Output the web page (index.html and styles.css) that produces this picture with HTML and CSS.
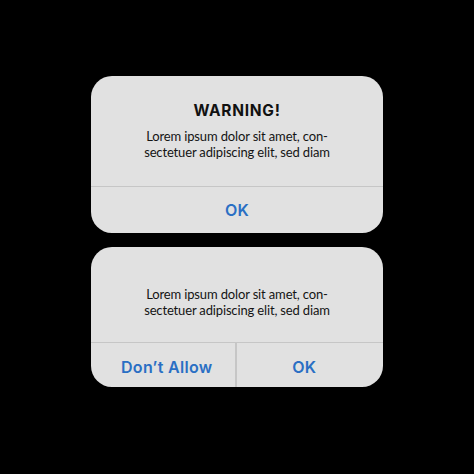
FILE: index.html
```html
<!DOCTYPE html>
<html>
<head>
<meta charset="utf-8">
<link rel="stylesheet" href="styles.css">
</head>
<body>
<main class="stage">
  <section class="alert">
    <div class="alert-body first">
      <h1 class="alert-title">WARNING!</h1>
      <p class="alert-text">Lorem ipsum dolor sit amet, con-<br>sectetuer adipiscing elit, sed diam</p>
    </div>
    <div class="alert-actions single">
      <button class="action">OK</button>
    </div>
  </section>
  <section class="alert">
    <div class="alert-body second">
      <p class="alert-text">Lorem ipsum dolor sit amet, con-<br>sectetuer adipiscing elit, sed diam</p>
    </div>
    <div class="alert-actions double">
      <button class="action deny">Don’t Allow</button>
      <button class="action split">OK</button>
    </div>
  </section>
</main>
</body>
</html>
```
FILE: styles.css
```css
html, body {
  margin: 0;
  padding: 0;
  background: #000;
}
.stage {
  width: 474px;
  height: 474px;
  box-sizing: border-box;
  padding: 76px 0 0 91px;
  display: flex;
  flex-direction: column;
  gap: 14px;
}
.alert {
  width: 292px;
  background: #e1e1e1;
  border-radius: 21px;
  overflow: hidden;
  display: flex;
  flex-direction: column;
}
.alert-body {
  display: flex;
  flex-direction: column;
  align-items: center;
  border-bottom: 1px solid #c6c6c6;
  box-sizing: border-box;
}
.alert-body.first {
  height: 111px;
  padding-top: 25px;
}
.alert-body.second {
  height: 96px;
  padding-top: 40px;
}
.alert-title {
  margin: 0 0 8px;
  font-family: "Inter", "Liberation Sans", sans-serif;
  font-weight: 700;
  font-size: 15.5px;
  line-height: 20px;
  letter-spacing: 0.7px;
  color: #111;
}
.alert-text {
  margin: 0;
  font-family: "Lato", "Open Sans", sans-serif;
  font-size: 13px;
  line-height: 15.5px;
  letter-spacing: -0.15px;
  text-align: center;
  color: #141414;
}
.alert-actions {
  display: flex;
}
.alert-actions.single {
  height: 46px;
}
.alert-actions.double {
  height: 44px;
}
.action {
  flex: 1;
  border: none;
  background: transparent;
  padding: 0;
  margin: 0;
  font-family: "Inter", "Liberation Sans", sans-serif;
  font-weight: 600;
  font-size: 16px;
  letter-spacing: 0.3px;
  color: #2a6fc4;
  display: flex;
  align-items: center;
  justify-content: center;
}
.alert-actions.double .action {
  padding-top: 3px;
}
.action.deny {
  padding-left: 8px;
}
.action.split {
  border-left: 2px solid #c6c6c6;
  padding-right: 11px;
}
```
